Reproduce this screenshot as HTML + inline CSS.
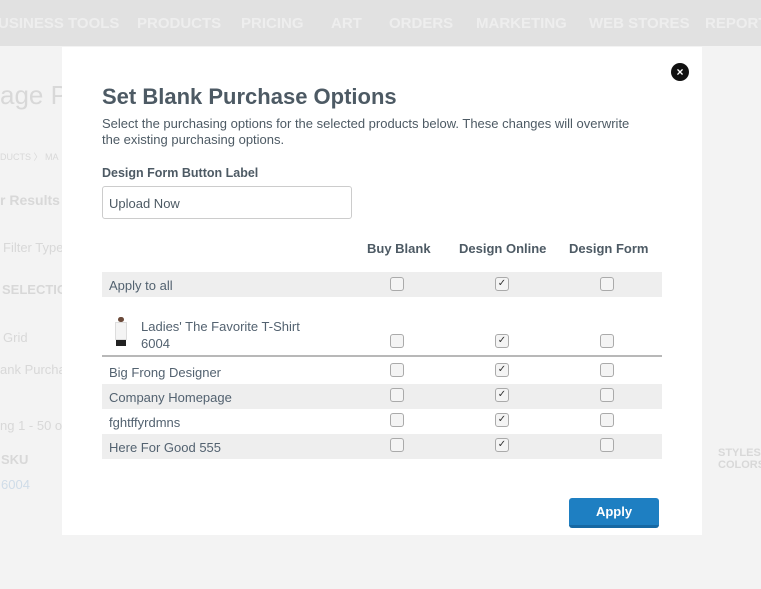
<!DOCTYPE html>
<html><head><style>
*{margin:0;padding:0;box-sizing:border-box}
body{width:761px;height:589px;overflow:hidden;background:#f3f3f3;font-family:"Liberation Sans",sans-serif;position:relative;color:#4d5a64}
.a{position:absolute;white-space:nowrap}
.nav{left:0;top:0;width:761px;height:46px;background:#e1e1e1}
.nav span{position:absolute;top:15px;color:#eeeeee;font-size:15px;font-weight:bold}
.bg{color:#d8d8d8;font-size:13px}
.modal{left:62px;top:47px;width:640px;height:488px;background:#fff}
.row{left:102px;width:560px;height:25px;font-size:13px;padding:6px 7px;color:#536270}
.g{background:#eeeeee}
.cb{position:absolute;width:14px;height:14px;border:1px solid #aaa;border-radius:3px;background:#f4f4f4;font-size:10px;line-height:12px;text-align:center;color:#333}
.th{font-weight:bold;font-size:13px;color:#4d5a64;top:241px}
</style></head><body>
<div class="a nav">
<span style="left:-2px">USINESS TOOLS</span><span style="left:137px">PRODUCTS</span><span style="left:241px">PRICING</span><span style="left:331px">ART</span><span style="left:389px">ORDERS</span><span style="left:476px">MARKETING</span><span style="left:589px">WEB STORES</span><span style="left:705px">REPORTS</span>
</div>
<div class="a bg" style="left:0;top:80px;font-size:26px">age Pr</div>
<div class="a bg" style="left:0;top:150px;font-size:9px">DUCTS 〉 MA</div>
<div class="a bg" style="left:0;top:192px;font-weight:bold;font-size:14px">r Results</div>
<div class="a bg" style="left:3px;top:240px">Filter Type</div>
<div class="a bg" style="left:2px;top:282px;font-weight:bold">SELECTION</div>
<div class="a bg" style="left:3px;top:330px">Grid</div>
<div class="a bg" style="left:0;top:362px">ank Purcha</div>
<div class="a bg" style="left:0;top:418px">ng 1 - 50 of</div>
<div class="a bg" style="left:1px;top:452px;font-weight:bold">SKU</div>
<div class="a" style="left:1px;top:477px;font-size:13px;color:#cfdce8">6004</div>
<div class="a bg" style="left:718px;top:447px;font-weight:bold;font-size:11px;line-height:12px">STYLES<br>COLORS</div>

<div class="a modal"></div>
<div class="a" style="left:671px;top:63px;width:18px;height:18px;border-radius:50%;background:#111;color:#fff;font-size:12px;line-height:18px;text-align:center;font-weight:bold">×</div>
<div class="a" style="left:102px;top:84px;font-size:22px;font-weight:bold;color:#4d5a64">Set Blank Purchase Options</div>
<div class="a" style="left:102px;top:116px;font-size:13px;line-height:16px;color:#4d5a64">Select the purchasing options for the selected products below. These changes will overwrite<br>the existing purchasing options.</div>
<div class="a" style="left:102px;top:166px;font-size:12.5px;font-weight:bold">Design Form Button Label</div>
<div class="a" style="left:102px;top:186px;width:250px;height:33px;border:1px solid #ccc;border-radius:3px;font-size:13px;padding:9px 6px;color:#4d5a64">Upload Now</div>
<div class="a th" style="left:367px">Buy Blank</div>
<div class="a th" style="left:459px">Design Online</div>
<div class="a th" style="left:569px">Design Form</div>

<div class="a row g" style="top:272px">Apply to all</div>
<div class="a" style="left:114px;top:317px;width:14px;height:30px">
<div style="margin:0 auto;width:6px;height:5px;background:#6b4a3a;border-radius:3px"></div>
<div style="width:12px;height:18px;background:#f4f4f4;border:1px solid #ddd;margin:0 auto"></div>
<div style="width:10px;height:6px;background:#222;margin:0 auto"></div></div>
<div class="a" style="left:141px;top:318px;font-size:13px;line-height:17px;color:#536270">Ladies' The Favorite T-Shirt<br>6004</div>
<div class="a" style="left:102px;top:355px;width:560px;height:2px;background:#b8b8b8"></div>
<div class="a row" style="top:359px">Big Frong Designer</div>
<div class="a row g" style="top:384px">Company Homepage</div>
<div class="a row" style="top:409px">fghtffyrdmns</div>
<div class="a row g" style="top:434px">Here For Good 555</div>

<div class="cb" style="left:390px;top:277px"></div><div class="cb" style="left:495px;top:277px">✓</div><div class="cb" style="left:600px;top:277px"></div>
<div class="cb" style="left:390px;top:334px"></div><div class="cb" style="left:495px;top:334px">✓</div><div class="cb" style="left:600px;top:334px"></div>
<div class="cb" style="left:390px;top:363px"></div><div class="cb" style="left:495px;top:363px">✓</div><div class="cb" style="left:600px;top:363px"></div>
<div class="cb" style="left:390px;top:388px"></div><div class="cb" style="left:495px;top:388px">✓</div><div class="cb" style="left:600px;top:388px"></div>
<div class="cb" style="left:390px;top:413px"></div><div class="cb" style="left:495px;top:413px">✓</div><div class="cb" style="left:600px;top:413px"></div>
<div class="cb" style="left:390px;top:438px"></div><div class="cb" style="left:495px;top:438px">✓</div><div class="cb" style="left:600px;top:438px"></div>

<div class="a" style="left:569px;top:498px;width:90px;height:30px;background:#1e7fc2;border-bottom:3px solid #1668a3;border-radius:3px;color:#fff;font-weight:bold;font-size:13px;text-align:center;line-height:28px">Apply</div>
</body></html>
